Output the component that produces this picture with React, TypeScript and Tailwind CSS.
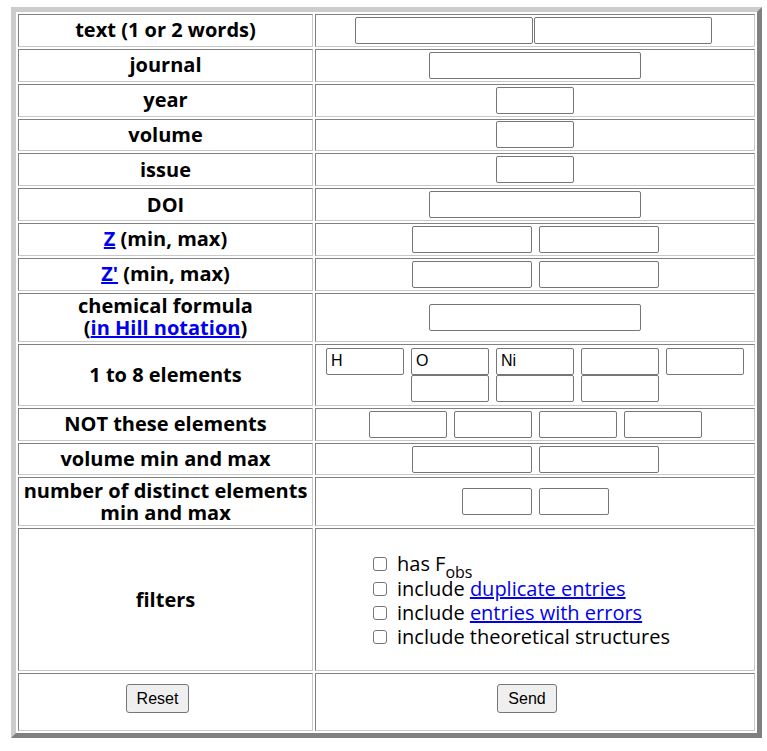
import React from 'react';

const cell =
  'border border-t-[#808080] border-l-[#808080] border-r-[#c8c8c8] border-b-[#c8c8c8] p-0 text-center align-middle';

function Field({ className = '', value }: { className?: string; value?: string }) {
  return (
    <input
      type="text"
      defaultValue={value}
      className={`h-[27px] border border-[#767676] rounded-[2px] px-[4px] bg-white text-[16px] text-black font-['Liberation_Sans',Arial,sans-serif] outline-none ${className}`}
    />
  );
}

function Row({ label, h = 'h-[32.85px]', children }: { label: React.ReactNode; h?: string; children: React.ReactNode }) {
  return (
    <tr>
      <td className={`${cell} ${h} w-[295px] font-bold text-[20px] leading-[22px]`}>{label}</td>
      <td className={cell}>
        <div className="flex justify-center gap-[7px]">{children}</div>
      </td>
    </tr>
  );
}

function Check({ children, h }: { children: React.ReactNode; h: string }) {
  return (
    <label className={`flex items-center ${h}`}>
      <input
        type="checkbox"
        className="appearance-none shrink-0 w-[14px] h-[14px] border border-[#767676] rounded-[3px] bg-white mr-[10px]"
      />
      <span className="whitespace-nowrap">{children}</span>
    </label>
  );
}

const link = 'text-[#0000ee] underline';
const btn =
  "mr-[16px] mb-[8px] px-[10px] py-[4px] text-[16px] leading-[19px] bg-[#efefef] border border-[#767676] rounded-[3px] font-['Liberation_Sans',Arial,sans-serif]";

export default function App() {
  return (
    <div className="bg-white min-h-screen pt-[7px] pl-[11px] text-black font-['Open_Sans',sans-serif]">
      <table className="w-[751px] border-separate border-spacing-[2px] border-[5px] border-t-[#cccccc] border-l-[#cccccc] border-r-[#808080] border-b-[#808080]">
        <tbody>
          <Row label="text (1 or 2 words)">
            <div className="flex gap-[1px] mr-[3px]">
              <Field className="w-[178px]" />
              <Field className="w-[178px]" />
            </div>
          </Row>
          <Row label="journal">
            <Field className="w-[212px]" />
          </Row>
          <Row label="year">
            <Field className="w-[78px]" />
          </Row>
          <Row label="volume">
            <Field className="w-[78px]" />
          </Row>
          <Row label="issue">
            <Field className="w-[78px]" />
          </Row>
          <Row label="DOI">
            <Field className="w-[212px]" />
          </Row>
          <Row
            label={
              <>
                <a href="#" className={link}>Z</a> (min, max)
              </>
            }
          >
            <Field className="w-[120px]" />
            <Field className="w-[120px]" />
          </Row>
          <Row
            label={
              <>
                <a href="#" className={link}>Z'</a> (min, max)
              </>
            }
          >
            <Field className="w-[120px]" />
            <Field className="w-[120px]" />
          </Row>
          <Row
            h="h-[49px]"
            label={
              <>
                chemical formula
                <br />(<a href="#" className={link}>in Hill notation</a>)
              </>
            }
          >
            <Field className="w-[212px]" />
          </Row>
          <Row h="h-[62px]" label="1 to 8 elements">
            <div className="flex flex-wrap justify-center gap-x-[7px] w-[418px]">
              <Field className="w-[78px]" value="H" />
              <Field className="w-[78px]" value="O" />
              <Field className="w-[78px]" value="Ni" />
              <Field className="w-[78px]" />
              <Field className="w-[78px]" />
              <Field className="w-[78px]" />
              <Field className="w-[78px]" />
              <Field className="w-[78px]" />
            </div>
          </Row>
          <Row label="NOT these elements">
            <Field className="w-[78px]" />
            <Field className="w-[78px]" />
            <Field className="w-[78px]" />
            <Field className="w-[78px]" />
          </Row>
          <Row label="volume min and max">
            <Field className="w-[120px]" />
            <Field className="w-[120px]" />
          </Row>
          <Row
            h="h-[49px]"
            label={
              <>
                number of distinct elements
                <br />
                min and max
              </>
            }
          >
            <Field className="w-[70px]" />
            <Field className="w-[70px]" />
          </Row>
          <tr>
            <td className={`${cell} h-[143px] w-[295px] font-bold text-[20px]`}>filters</td>
            <td className={`${cell} text-left pl-[57px] text-[20px] leading-[24px]`}>
              <div className="flex flex-col">
                <Check h="h-[27px]">
                  has F<sub className="text-[16px] align-[-3px] leading-none">obs</sub>
                </Check>
                <Check h="h-[23px]">
                  include <a href="#" className={link}>duplicate entries</a>
                </Check>
                <Check h="h-[24px]">
                  include <a href="#" className={link}>entries with errors</a>
                </Check>
                <Check h="h-[24px]">include theoretical structures</Check>
              </div>
            </td>
          </tr>
          <tr>
            <td className={`${cell} h-[58px] w-[295px]`}>
              <button className={btn}>Reset</button>
            </td>
            <td className={cell}>
              <button className={btn}>Send</button>
            </td>
          </tr>
        </tbody>
      </table>
    </div>
  );
}
